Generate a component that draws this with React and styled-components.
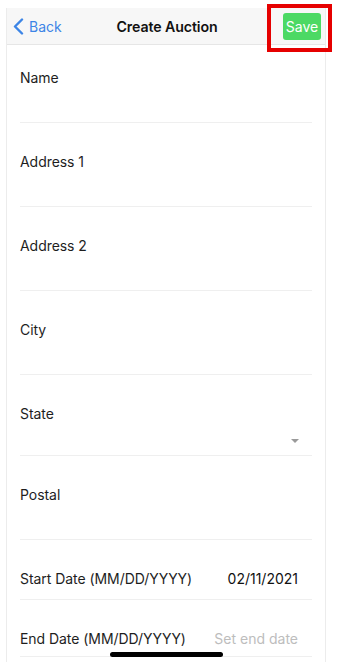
import React from "react"
import styled, { createGlobalStyle } from "styled-components"

const GlobalStyle = createGlobalStyle`
  html, body {
    margin: 0;
    padding: 0;
    background: #ffffff;
    overflow: hidden;
  }
  body {
    font-family: Inter, "Liberation Sans", Arial, sans-serif;
    -webkit-font-smoothing: antialiased;
  }
`

const fields = [
  { label: "Name" },
  { label: "Address 1" },
  { label: "Address 2" },
  { label: "City" },
  { label: "State", select: true },
  { label: "Postal" },
]

export default function App() {
  return (
    <>
      <GlobalStyle />
      <Screen>
        <NavBar>
          <BackButton>
            <svg width="11" height="17" viewBox="0 0 11 17" fill="none">
              <path
                d="M9 1.5L2 8.5L9 15.5"
                stroke="currentColor"
                strokeWidth="2.4"
                strokeLinecap="round"
                strokeLinejoin="round"
              />
            </svg>
            <span>Back</span>
          </BackButton>
          <Title>Create Auction</Title>
          <SaveSlot>
            <SaveButton>Save</SaveButton>
            <Highlight />
          </SaveSlot>
        </NavBar>
        <Form>
          {fields.map((f, i) => (
            <Field key={f.label} $first={i === 0}>
              <Label>{f.label}</Label>
              <InputArea $select={f.select}>
                {f.select && <Caret />}
              </InputArea>
            </Field>
          ))}
          <DateRow>
            <Label>Start Date (MM/DD/YYYY)</Label>
            <DateValue>02/11/2021</DateValue>
          </DateRow>
          <DateRow $last>
            <Label>End Date (MM/DD/YYYY)</Label>
            <DateValue $placeholder>Set end date</DateValue>
          </DateRow>
        </Form>
      </Screen>
      <HomeIndicator />
    </>
  )
}

const Screen = styled.div`
  margin: 8px 0 0 6px;
  width: 318px;
  min-height: calc(100vh - 8px);
  border-left: 1px solid #ececec;
  border-right: 1px solid #ececec;
  background: #ffffff;
`

const NavBar = styled.div`
  height: 36px;
  background: #f7f7f7;
  border-bottom: 1px solid #e6e6e6;
  display: grid;
  grid-template-columns: 1fr auto 1fr;
  align-items: center;
  padding: 0 4px 0 6px;
`

const BackButton = styled.div`
  display: flex;
  align-items: center;
  gap: 5px;
  color: #3d85e6;
  font-size: 14px;
  svg {
    display: block;
  }
`

const Title = styled.div`
  font-size: 14.2px;
  font-weight: 600;
  color: #111111;
  letter-spacing: -0.1px;
`

const SaveSlot = styled.div`
  justify-self: end;
  position: relative;
`

const SaveButton = styled.div`
  width: 38px;
  height: 27px;
  border-radius: 3px;
  background: #4cd964;
  color: #ffffff;
  font-size: 14px;
  display: flex;
  align-items: center;
  justify-content: center;
`

const Highlight = styled.div`
  position: absolute;
  left: -16px;
  right: -11px;
  top: -9px;
  bottom: -12px;
  border: 4px solid #e60000;
  pointer-events: none;
`

const Form = styled.div`
  padding: 0 13px;
`

const Field = styled.div`
  padding-top: ${(p) => (p.$first ? "24px" : "30px")};
`

const Label = styled.div`
  font-size: 14px;
  line-height: 18px;
  color: #1e1e1e;
  letter-spacing: -0.05px;
`

const InputArea = styled.div`
  height: ${(p) => (p.$select ? "33px" : "36px")};
  border-bottom: 1px solid #efefef;
  display: flex;
  align-items: center;
  justify-content: flex-end;
  padding: 3px 13px 0 0;
  box-sizing: border-box;
`

const Caret = styled.div`
  width: 0;
  height: 0;
  border-left: 4px solid transparent;
  border-right: 4px solid transparent;
  border-top: 4px solid #9a9a9a;
`

const DateRow = styled.div`
  display: flex;
  justify-content: space-between;
  align-items: center;
  padding: 30px 14px ${(p) => (p.$last ? "8px" : "11px")} 0;
  border-bottom: 1px solid #efefef;
`

const DateValue = styled.div`
  font-size: 14px;
  line-height: 18px;
  color: ${(p) => (p.$placeholder ? "#bdbdbd" : "#111111")};
`

const HomeIndicator = styled.div`
  position: fixed;
  left: 110px;
  width: 113px;
  bottom: 5px;
  height: 5px;
  border-radius: 3px;
  background: #000000;
`
